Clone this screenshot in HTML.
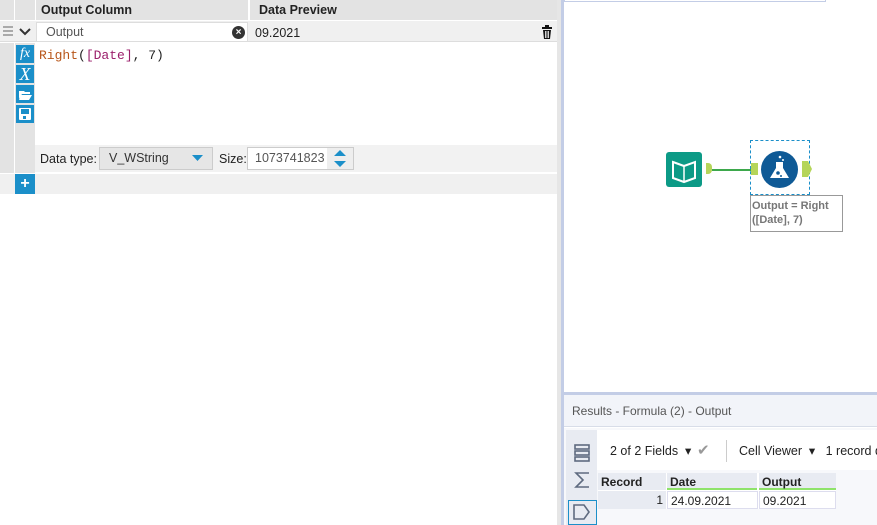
<!DOCTYPE html><html><head><style>
*{margin:0;padding:0;box-sizing:border-box}
body{width:877px;height:525px;position:relative;overflow:hidden;background:#fff;font-family:"Liberation Sans",sans-serif;font-size:12px;color:#222}
.a{position:absolute;white-space:nowrap}
.bi{position:absolute;left:16px;width:18px;height:18px;background:#1b8fc9;color:#fff;font-family:"Liberation Serif",serif;font-style:italic;text-align:center;font-size:14px;line-height:18px}
</style></head><body>
<div class="a" style="left:0;top:0;width:557px;height:20px;background:#e3e3e3"></div>
<div class="a" style="left:14px;top:0;width:1px;height:172px;background:#fff"></div>
<div class="a" style="left:35px;top:0;width:1px;height:20px;background:#fff"></div>
<div class="a" style="left:248px;top:0;width:2px;height:20px;background:#fff"></div>
<div class="a" style="left:41px;top:3px;font-weight:bold;font-size:12.5px">Output Column</div>
<div class="a" style="left:259px;top:3px;font-weight:bold;font-size:12.5px">Data Preview</div>
<div class="a" style="left:0;top:21px;width:557px;height:21px;background:#f0f0f0;border-bottom:1px solid #ddd"></div>
<div class="a" style="left:3px;top:26px;width:10px;height:2px;background:#aaa;box-shadow:0 4px #aaa,0 8px #aaa"></div>
<svg class="a" style="left:18px;top:27px" width="14" height="9"><path d="M2 2l5 5 5-5" stroke="#333" stroke-width="2" fill="none"/></svg>
<div class="a" style="left:36px;top:22px;width:212px;height:20px;background:#fff;border:1px solid #ddd"></div>
<div class="a" style="left:46px;top:25px;color:#555;font-size:12.5px">Output</div>
<div class="a" style="left:232px;top:26px;width:13px;height:13px;border-radius:50%;background:#333;color:#fff;font-size:10px;line-height:13px;text-align:center;font-weight:bold">×</div>
<div class="a" style="left:255px;top:26px;font-size:12.5px">09.2021</div>
<svg class="a" style="left:541px;top:24px" width="12" height="16"><rect x="1" y="3" width="10" height="2" fill="#111"/><rect x="4" y="1" width="4" height="2" fill="#111"/><path d="M2 6h8l-1 9H3z" fill="#111"/><path d="M4.5 7v7M6 7v7M7.5 7v7" stroke="#fff" stroke-width=".8"/></svg>
<div class="a" style="left:0;top:43px;width:14px;height:130px;background:#e3e3e3"></div>
<div class="a" style="left:15px;top:43px;width:20px;height:130px;background:#e3e3e3"></div>
<div class="bi" style="top:45px">fx</div>
<div class="bi" style="top:65px;font-size:18px">X</div>
<div class="bi" style="top:85px"><svg width="18" height="18"><path d="M3 6h5l1 1h5v2H6L3 14z M5 10h11l-3 5H3z" fill="#fff"/></svg></div>
<div class="bi" style="top:105px"><svg width="18" height="18"><rect x="3" y="3" width="12" height="12" rx="1" fill="#fff"/><rect x="5" y="4" width="8" height="5" fill="#1b8fc9"/><rect x="7" y="11" width="3" height="3" fill="#1b8fc9"/></svg></div>
<div class="a" style="left:39px;top:48px;font-family:'Liberation Mono',monospace;font-size:13px"><span style="color:#b8561a">Right</span>(<span style="color:#9b1f6b">[Date]</span>, 7)</div>
<div class="a" style="left:35px;top:145px;width:522px;height:27px;background:#f2f2f2"></div>
<div class="a" style="left:40px;top:152px;font-size:12.5px">Data type:</div>
<div class="a" style="left:99px;top:147px;width:114px;height:23px;background:#e6e6e6;border:1px solid #ccc"></div>
<div class="a" style="left:109px;top:151px;color:#333;font-size:12.5px">V_WString</div>
<svg class="a" style="left:192px;top:155px" width="11" height="7"><path d="M0 0h11L5.5 6z" fill="#1b8fc9"/></svg>
<div class="a" style="left:219px;top:152px;font-size:12.5px">Size:</div>
<div class="a" style="left:247px;top:147px;width:107px;height:23px;background:#fff;border:1px solid #ccc"></div>
<div class="a" style="left:255px;top:151px;color:#555;font-size:12.5px">1073741823</div>
<div class="a" style="left:327px;top:148px;width:26px;height:21px;background:#eee"></div>
<svg class="a" style="left:333px;top:149px" width="14" height="19"><path d="M1 7l6-6 6 6zM1 12h12l-6 6z" fill="#1b8fc9"/></svg>
<div class="a" style="left:0;top:174px;width:557px;height:20px;background:#f0f0f0"></div>
<div class="a" style="left:15px;top:174px;width:20px;height:20px;background:#1b8fc9;color:#fff;text-align:center;font-weight:bold;font-size:16px;line-height:20px">+</div>
<div class="a" style="left:557px;top:0;width:4px;height:525px;background:#e6e6e6"></div>
<div class="a" style="left:561px;top:0;width:3px;height:525px;background:#c3cde6"></div>
<div class="a" style="left:564px;top:0;width:262px;height:2px;border:1px solid #c3cde6;border-top:none"></div>
<div class="a" style="left:666px;top:152px;width:36px;height:35px;background:#0c9a86;border-radius:3px"></div>
<svg class="a" style="left:666px;top:152px" width="36" height="35"><path d="M7 10l11 4 11-4v16l-11 4-11-4z" fill="none" stroke="#fff" stroke-width="2"/><path d="M18 14v16" stroke="#fff" stroke-width="1.5"/><circle cx="24" cy="15" r="1.3" fill="#0c9a86"/></svg>
<div class="a" style="left:706px;top:163px;width:6px;height:11px;background:#b5d55a;border-radius:0 4px 4px 0"></div>
<div class="a" style="left:712px;top:169px;width:41px;height:2px;background:#3da84c"></div>
<div class="a" style="left:750px;top:140px;width:60px;height:55px;border:1px dashed #1b8fc9"></div>
<div class="a" style="left:751px;top:163px;width:7px;height:12px;background:#b5d55a"></div>
<div class="a" style="left:761px;top:151px;width:37px;height:37px;border-radius:50%;background:#0f5a96"></div>
<svg class="a" style="left:761px;top:151px" width="37" height="37"><path d="M15 11h7v6l6 10H9l6-10z" fill="#fff"/><circle cx="17" cy="22" r="1.8" fill="#0f5a96"/><circle cx="20" cy="25" r="1" fill="#0f5a96"/><circle cx="19" cy="6" r="1.3" fill="#fff"/><circle cx="22" cy="9" r="1" fill="#fff"/></svg>
<div class="a" style="left:802px;top:161px;width:10px;height:16px;background:#b5d55a;clip-path:polygon(0 0,60% 0,100% 50%,60% 100%,0 100%)"></div>
<div class="a" style="left:750px;top:195px;width:93px;height:37px;border:1px solid #999;background:#fff;color:#777;font-weight:bold;font-size:11px;line-height:14px;padding:3px 1px;white-space:normal">Output = Right ([Date], 7)</div>
<div class="a" style="left:564px;top:392px;width:313px;height:3px;background:#c3cde6"></div>
<div class="a" style="left:564px;top:395px;width:313px;height:32px;background:#f2f4f9;border-bottom:1px solid #d8dde8"></div>
<div class="a" style="left:572px;top:404px;color:#555;font-size:12px">Results - Formula (2) - Output</div>
<div class="a" style="left:564px;top:428px;width:313px;height:97px;background:#f7f8fb"></div>
<div class="a" style="left:597px;top:430px;width:280px;height:40px;background:#fff"></div>
<div class="a" style="left:566px;top:430px;width:31px;height:95px;background:#e8ebf2"></div>
<svg class="a" style="left:573px;top:442px" width="18" height="80"><g fill="none" stroke="#5f6b80" stroke-width="1.6"><rect x="2" y="3" width="14" height="4"/><rect x="2" y="9" width="14" height="4"/><rect x="2" y="15" width="14" height="4"/><path d="M16 31H3l7 7-7 7h13"/><path d="M1 63h10l5 7-5 7H1z"/></g></svg>
<div class="a" style="left:568px;top:500px;width:29px;height:25px;border:1px solid #1b8fc9"></div>
<div class="a" style="left:610px;top:443px;font-size:12.5px">2 of 2 Fields &nbsp;▾</div>
<div class="a" style="left:697px;top:441px;color:#999;font-size:15px">✔</div>
<div class="a" style="left:726px;top:440px;width:1px;height:22px;background:#ccc"></div>
<div class="a" style="left:739px;top:443px;font-size:12.5px">Cell Viewer &nbsp;▾ &nbsp; 1 record di</div>
<div class="a" style="left:598px;top:473px;width:238px;height:36px;background:#fff"></div>
<div class="a" style="left:598px;top:473px;width:68px;height:17px;background:#e8ebf2;font-weight:bold;padding:2px 3px">Record</div>
<div class="a" style="left:667px;top:473px;width:90px;height:17px;background:#e8ebf2;font-weight:bold;padding:2px 3px;border-bottom:2px solid #8fe36a">Date</div>
<div class="a" style="left:759px;top:473px;width:77px;height:17px;background:#e8ebf2;font-weight:bold;padding:2px 3px;border-bottom:2px solid #8fe36a">Output</div>
<div class="a" style="left:598px;top:491px;width:68px;height:18px;background:#e8ebf2;text-align:right;padding:2px 3px">1</div>
<div class="a" style="left:667px;top:491px;width:91px;height:18px;border:1px solid #dde;padding:2px 3px">24.09.2021</div>
<div class="a" style="left:759px;top:491px;width:77px;height:18px;border:1px solid #dde;padding:2px 3px">09.2021</div>
</body></html>
